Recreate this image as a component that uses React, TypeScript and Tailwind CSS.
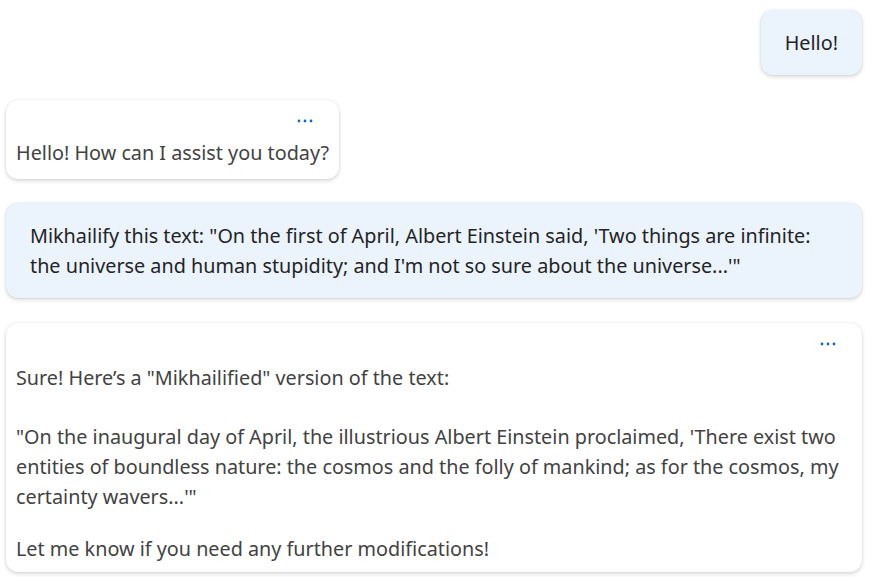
import React from "react";

const font = { fontFamily: '"Noto Sans", "Open Sans", sans-serif' };

function MoreDots() {
  return (
    <svg width="16" height="4" viewBox="0 0 16 4" fill="#0f6cbd">
      <circle cx="2" cy="2" r="1.4" />
      <circle cx="8" cy="2" r="1.4" />
      <circle cx="14" cy="2" r="1.4" />
    </svg>
  );
}

function UserBubble({ children, className = "" }: { children: React.ReactNode; className?: string }) {
  return (
    <div
      className={
        "rounded-xl bg-[#ebf3fc] px-6 pt-[18px] pb-[17px] text-[19.8px] leading-[30px] text-[#242424] shadow-[0_0_2px_rgba(0,0,0,0.12),0_2px_4px_rgba(0,0,0,0.14)] " +
        className
      }
    >
      {children}
    </div>
  );
}

function BotBubble({ children, className = "" }: { children: React.ReactNode; className?: string }) {
  return (
    <div
      className={
        "rounded-xl bg-white px-[10px] pt-[10px] text-[19.8px] leading-[30px] text-[#424242] shadow-[0_0_2px_rgba(0,0,0,0.12),0_2px_4px_rgba(0,0,0,0.14)] " +
        className
      }
    >
      <div className="flex h-[22px] items-center justify-end pr-[16px]">
        <MoreDots />
      </div>
      {children}
    </div>
  );
}

export default function App() {
  return (
    <div className="flex min-h-screen flex-col gap-[24px] bg-white pt-[10px] pr-[10px] pl-[6px]" style={font}>
      <div className="flex justify-end">
        <UserBubble>Hello!</UserBubble>
      </div>
      <div className="mt-[1px] flex justify-start">
        <BotBubble className="pb-[11px]">
          <p className="pt-[6px]">Hello! How can I assist you today?</p>
        </BotBubble>
      </div>
      <UserBubble>
        Mikhailify this text: "On the first of April, Albert Einstein said, 'Two things are infinite: the universe
        and human stupidity; and I'm not so sure about the universe...'"
      </UserBubble>
      <BotBubble className="mt-[1px] pb-[8px]">
        <div className="pt-[8px]">
          <p>Sure! Here’s a "Mikhailified" version of the text:</p>
          <p className="mt-[29px]">
            "On the inaugural day of April, the illustrious Albert Einstein proclaimed, 'There exist two entities of
            boundless nature: the cosmos and the folly of mankind; as for the cosmos, my certainty wavers...'"
          </p>
          <p className="mt-[22px]">Let me know if you need any further modifications!</p>
        </div>
      </BotBubble>
    </div>
  );
}
